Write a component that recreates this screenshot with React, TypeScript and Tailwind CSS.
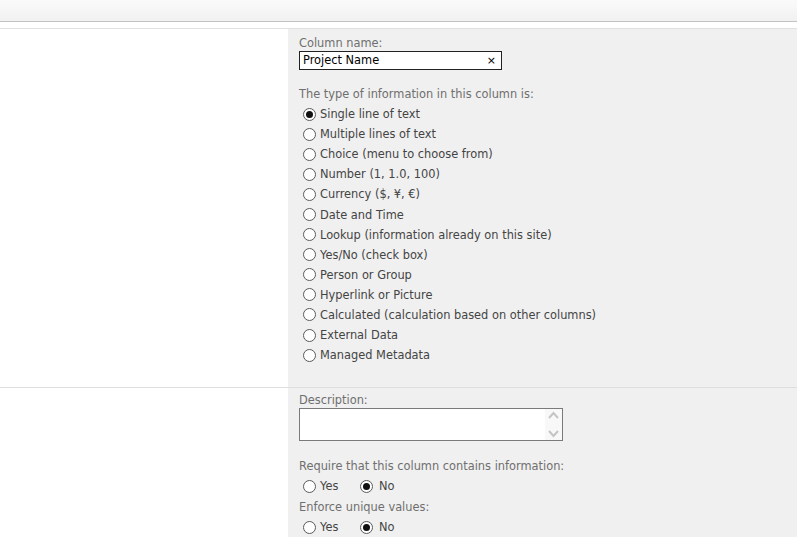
import React from 'react'

const font = { fontFamily: '"DejaVu Sans", Verdana, sans-serif' }

const types = [
  'Single line of text',
  'Multiple lines of text',
  'Choice (menu to choose from)',
  'Number (1, 1.0, 100)',
  'Currency ($, ¥, €)',
  'Date and Time',
  'Lookup (information already on this site)',
  'Yes/No (check box)',
  'Person or Group',
  'Hyperlink or Picture',
  'Calculated (calculation based on other columns)',
  'External Data',
  'Managed Metadata',
]

function Radio({ checked }: { checked?: boolean }) {
  return (
    <span className="w-[13px] h-[13px] rounded-full border border-[#5a5a5a] bg-white flex items-center justify-center shrink-0">
      {checked && <span className="w-[7px] h-[7px] rounded-full bg-[#111]" />}
    </span>
  )
}

function Option({ label, checked }: { label: string; checked?: boolean }) {
  return (
    <div className="h-[20.1px] flex items-center pl-[4px] gap-[4px]">
      <Radio checked={checked} />
      <span className="text-[11.4px] leading-[14px] text-[#444]">{label}</span>
    </div>
  )
}

function YesNo() {
  return (
    <div className="h-[20px] flex items-center pl-[4px]">
      <Radio />
      <span className="ml-[4px] w-[40px] text-[11.4px] leading-[14px] text-[#444]">Yes</span>
      <Radio checked />
      <span className="ml-[6px] text-[11.4px] leading-[14px] text-[#444]">No</span>
    </div>
  )
}

export default function App() {
  return (
    <div className="w-[797px] h-[537px] overflow-hidden bg-white" style={font}>
      <div className="h-[22px] bg-gradient-to-b from-[#fafafa] to-[#f1f1f1] border-b border-[#c2c2c2]" />
      <div className="h-[7px] border-b border-[#e1e1e1]" />

      <div className="flex border-b border-[#dedede]">
        <div className="w-[288px]" />
        <div className="flex-1 bg-[#f0f0f0] pl-[11px] pt-[7px] pb-[22px]">
          <div className="text-[11.4px] leading-[14px] text-[#6f6f6f]">Column name:</div>
          <div className="mt-[1px] w-[203px] h-[19px] border border-[#222] bg-white flex items-center pl-[3px] pr-[5px]">
            <span className="flex-1 text-[11.4px] text-black">Project Name</span>
            <span className="text-[11px] leading-none text-black">×</span>
          </div>
          <div className="mt-[17px] text-[11.4px] leading-[14px] text-[#6f6f6f]">The type of information in this column is:</div>
          <div className="mt-[3px]">
            {types.map((t, i) => (
              <Option key={t} label={t} checked={i === 0} />
            ))}
          </div>
        </div>
      </div>

      <div className="flex">
        <div className="w-[288px]" />
        <div className="flex-1 bg-[#f0f0f0] pl-[11px] pt-[5px] h-[160px]">
          <div className="text-[11.4px] leading-[14px] text-[#6f6f6f]">Description:</div>
          <div className="mt-[1px] w-[264px] h-[33px] border border-[#7a7a7a] bg-white flex justify-end">
            <div className="w-[17px] bg-[#f8f8f8] flex flex-col items-center justify-between py-[2px]">
              <svg width="11" height="8" viewBox="0 0 11 8">
                <path d="M1 7 L5.5 2 L10 7" fill="none" stroke="#c4c4c4" strokeWidth="2" />
              </svg>
              <svg width="11" height="8" viewBox="0 0 11 8">
                <path d="M1 1 L5.5 6 L10 1" fill="none" stroke="#c4c4c4" strokeWidth="2" />
              </svg>
            </div>
          </div>
          <div className="mt-[18px] text-[11.4px] leading-[14px] text-[#6f6f6f]">Require that this column contains information:</div>
          <div className="mt-[3px]">
            <YesNo />
          </div>
          <div className="mt-[4px] text-[11.4px] leading-[14px] text-[#6f6f6f]">Enforce unique values:</div>
          <div className="mt-[3px]">
            <YesNo />
          </div>
        </div>
      </div>
    </div>
  )
}
